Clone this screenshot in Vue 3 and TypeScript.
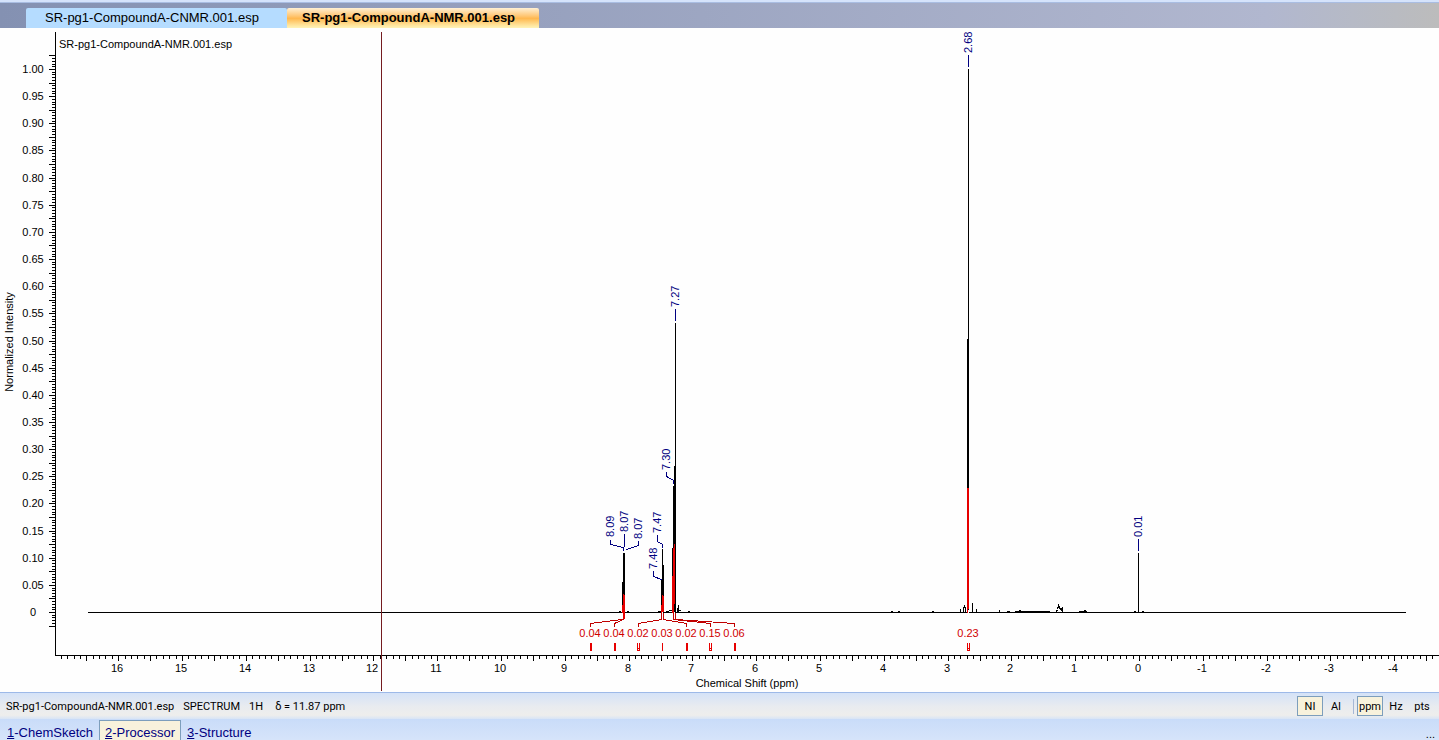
<script setup lang="ts">
import { ref } from 'vue'

interface PeakLabel { text: string; x: number; y: number; line: string }
interface Integral { text: string; x: number; kind: 'bar' | 'cup' | 'thin' }

const ORIGIN_X = 1139
const PPM = 63.8
const BASE_Y = 584
const UNIT_Y = 543

const xOf = (ppm: number): number => Math.round(ORIGIN_X - ppm * PPM)
const yOf = (v: number): number => Math.round(BASE_Y - v * UNIT_Y)

const xTicks = Array.from({ length: 217 }, (_, i) => i - 47)
  .filter((n) => xOf(n / 10) > 56 && xOf(n / 10) < 1439)
const xLabels = Array.from({ length: 21 }, (_, i) => 16 - i)
const yTicks = Array.from({ length: 211 }, (_, i) => i - 5)
const yLabels = Array.from({ length: 21 }, (_, i) => 1 - i * 0.05)

const xTickPath = xTicks.map((n) => `M${xOf(n / 10)} 627v${n % 5 === 0 ? 5 : 3}`).join('')
const yTickPath = yTicks.map((n) => `M55 ${yOf(n / 200)}h${n % 5 === 0 ? -6 : -3}`).join('')

const peaks: PeakLabel[] = [
  { text: '8.09', x: 614, y: 509, line: 'M610 512v4l13 3v3' },
  { text: '8.07', x: 628, y: 504, line: 'M624 506v12' },
  { text: '8.07', x: 642, y: 511, line: 'M638 513v4l-12 4' },
  { text: '7.48', x: 657, y: 541, line: 'M653 543v5l8 3' },
  { text: '7.47', x: 661, y: 505, line: 'M657 507v6l5 3v3' },
  { text: '7.30', x: 670, y: 442, line: 'M666 444v4l7 4v3' },
  { text: '7.27', x: 679, y: 279, line: 'M675 281v11' },
  { text: '2.68', x: 972, y: 25, line: 'M968 27v11' },
  { text: '0.01', x: 1142, y: 509, line: 'M1138 511v11' },
]

const integrals: Integral[] = [
  { text: '0.04', x: 590, kind: 'bar' },
  { text: '0.04', x: 614, kind: 'bar' },
  { text: '0.02', x: 638, kind: 'cup' },
  { text: '0.03', x: 662, kind: 'thin' },
  { text: '0.02', x: 686, kind: 'bar' },
  { text: '0.15', x: 710, kind: 'cup' },
  { text: '0.06', x: 734, kind: 'bar' },
  { text: '0.23', x: 968, kind: 'cup' },
]

const marks: Record<Integral['kind'], string> = {
  bar: 'M0 615v7M1 615v7',
  cup: 'M-1 615v7M1 615v7M-1 620h2M-1 622h2',
  thin: 'M0 615v7',
}

const documents = ['SR-pg1-CompoundA-CNMR.001.esp', 'SR-pg1-CompoundA-NMR.001.esp']
const activeDocument = ref(1)
const intensity = ref('NI')
const unit = ref('ppm')
const modules = [
  { key: '1', name: 'ChemSketch' },
  { key: '2', name: 'Processor' },
  { key: '3', name: 'Structure' },
]
const activeModule = ref('2')
</script>

<template>
  <main class="window">
    <div class="top-edge"></div>
    <nav class="documents" aria-label="Documents">
      <button
        v-for="(doc, i) in documents"
        :key="doc"
        type="button"
        class="document"
        :class="{ active: i === activeDocument }"
        @click="activeDocument = i"
      >{{ doc }}</button>
    </nav>

    <section class="plot">
      <svg viewBox="0 0 1439 664" role="img" aria-label="Proton NMR spectrum">
        <text class="label" x="59" y="20">SR-pg1-CompoundA-NMR.001.esp</text>
        <g class="lines" transform="translate(.5 .5)">
          <path class="axis" d="M55 4V627H1439" />
          <path class="axis" :d="xTickPath" />
          <path class="axis" :d="yTickPath" />

          <path class="axis" d="M88 584H1405" />
          <path
            class="axis"
            d="M619 583h1M627 583h1M658 583h2M666 583h2M669 582h2M677 583V580M678 584V577M679 582h1M688 583h1M891 583h1M898 583h1M932 583h1M960 584V581M963 584v-3l1 -4l1 4v3M972 584V575M976 584V581M999 584V582M1007 583h2M1015 583h34M1019 582h1M1056 583l1 -2l1 -4l2 4l1 1M1061 582v-2M1062 583v-4M1079 583h7M1084 582h1M1134 583h1M1142 583h1"
          />
          <path class="axis" d="M622 584V554M623 584V525M624 584V525" />
          <path class="axis" d="M661 584V552M662 584V521M663 584V537" />
          <path class="axis" d="M672 584V520M673 584V458M674 584V438M675 584V295" />
          <path class="axis" d="M967 584V311M968 584V41" />
          <path class="axis" d="M1138 584V525" />
          <path class="integral" d="M622 584V577M623 590V566M624 590V567" />
          <path class="integral" d="M661 584V577M662 583V567M663 583V568" />
          <path class="integral" d="M672 584V548M673 584V520M674 575V516" />
          <path class="integral" d="M967 584V460M968 580V460" />
          <path class="white" d="M968 584V582M662 584v5M674 584v5" />
          <path
            class="bracket"
            d="M590 598v-3l32 -4M614 598v-3l9 -4M638 598v-3l23 -4v-6M663 585v6l23 4v3M673 585v6l37 4v3M675 585v6l59 4v3"
          />
          <path v-for="peak in peaks" :key="peak.line" class="pointer" :d="peak.line" />
          <path
            v-for="item in integrals"
            :key="item.x"
            class="integral"
            :d="marks[item.kind]"
            :transform="`translate(${item.x} 0)`"
          />
          <path class="cursor" d="M381 4V662" />
        </g>

        <text v-for="n in xLabels" :key="`x${n}`" class="label middle" :x="xOf(n) - 1" y="644">{{ n }}</text>
        <text v-for="v in yLabels" :key="`y${v}`" class="label middle" x="33" :y="yOf(v) + 4">{{ v < 0.01 ? '0' : v.toFixed(2) }}</text>
        <text class="label middle" x="747" y="659">Chemical Shift (ppm)</text>
        <text class="label middle" transform="translate(13 314) rotate(-90)">Normalized Intensity</text>
        <text
          v-for="peak in peaks"
          :key="`t${peak.x}`"
          class="label navy"
          :transform="`translate(${peak.x} ${peak.y}) rotate(-90)`"
        >{{ peak.text }}</text>
        <text v-for="item in integrals" :key="`i${item.x}`" class="label middle red" :x="item.x" y="609">{{ item.text }}</text>
      </svg>
    </section>

    <footer>
      <div class="status">
        <span>SR-pg1-CompoundA-NMR.001.esp</span>
        <span>SPECTRUM</span>
        <span>1H</span>
        <span class="shift">δ = 11.87 ppm</span>
        <div class="switches">
          <button
            v-for="item in ['NI', 'AI']"
            :key="item"
            type="button"
            :class="{ on: item === intensity }"
            @click="intensity = item"
          >{{ item }}</button>
          <i class="divider"></i>
          <button
            v-for="item in ['ppm', 'Hz', 'pts']"
            :key="item"
            type="button"
            :class="{ on: item === unit }"
            @click="unit = item"
          >{{ item }}</button>
        </div>
      </div>
      <div class="modules">
        <button
          v-for="item in modules"
          :key="item.key"
          type="button"
          :class="{ on: item.key === activeModule }"
          @click="activeModule = item.key"
        ><u>{{ item.key }}</u>-{{ item.name }}</button>
        <span class="more">...</span>
      </div>
    </footer>
  </main>
</template>

<style>
body {
  margin: 0;
  background: #fefefe;
}
</style>

<style scoped>
.window {
  display: flex;
  flex-direction: column;
  min-height: 100vh;
  font-family: "Liberation Sans", Arial, sans-serif;
  font-size: 11px;
  color: #000;
  background: #fefefe;
}
button {
  box-sizing: border-box;
  margin: 0;
  font-family: inherit;
  color: inherit;
  background: none;
  border: 1px solid transparent;
  border-radius: 0;
  white-space: nowrap;
}
.top-edge {
  height: 2px;
  background: #d5e3fb;
  border-bottom: 1px solid #a9bde2;
}
.documents {
  display: flex;
  box-sizing: border-box;
  height: 25px;
  padding: 5px 0 0 26px;
  background: linear-gradient(90deg, #8491b2, #b1b7cf 88%, #b6bac6 94%, #bcbcbc);
}
.document {
  width: 261px;
  padding: 0 0 0 19px;
  border: 0;
  border-radius: 2px 2px 0 0;
  background: #b5dcff;
  font-size: 13px;
  line-height: 20px;
  text-align: left;
}
.document.active {
  width: 252px;
  padding-left: 15px;
  font-weight: 700;
  background: linear-gradient(#fff0d4, #ffc673 40%, #ffb84f 52%, #ffe39a 85%, #fff3b8);
}
.plot svg {
  display: block;
  width: 100%;
  height: auto;
}
.lines {
  fill: none;
  stroke-width: 1;
  stroke-linecap: square;
  shape-rendering: crispEdges;
}
.axis { stroke: #000; }
.integral { stroke: #e60000; }
.bracket { stroke: #c00000; }
.pointer { stroke: #000080; }
.cursor { stroke: #741c20; }
.white { stroke: #fff; }
.label {
  font-size: 11px;
  fill: #000;
}
.middle { text-anchor: middle; }
.navy { fill: #000080; }
.red { fill: #d00000; }
footer {
  display: flex;
  flex: 1;
  flex-direction: column;
}
.status {
  display: flex;
  align-items: center;
  box-sizing: border-box;
  height: 27px;
  gap: 9px;
  padding: 0 4px 0 6px;
  border-top: 1px solid #9db9e8;
  background: linear-gradient(#d4e2f7, #e8ebf0 50%, #eeeeec 85%, #d8e4f6);
  font-family: Roboto, "Liberation Sans", sans-serif;
}
.shift { margin-left: 3px; }
.switches {
  display: flex;
  align-items: center;
  margin-left: auto;
}
.switches button {
  width: 26px;
  height: 20px;
  padding: 0;
  font-size: 11px;
}
.switches .on {
  background: #f8f2dc;
  border-color: #7d9ebc;
}
.divider {
  width: 1px;
  height: 15px;
  margin: 0 3px 0 4px;
  background: #a6b8d6;
}
.modules {
  display: flex;
  flex: 1;
  align-items: stretch;
  min-height: 20px;
  padding: 1px 4px 0 0;
  background: linear-gradient(#c9dcf9, #d6e4fa);
  color: #000080;
}
.modules button {
  height: 20px;
  padding: 4px 5px 0;
  border-bottom: 0;
  font-size: 13px;
  line-height: 16px;
}
.modules button:first-child { padding-left: 6px; }
.modules .on {
  background: #f8f2dc;
  border-color: #7d9ebc;
}
.more {
  margin-left: auto;
  align-self: flex-end;
  color: #000;
}
</style>
